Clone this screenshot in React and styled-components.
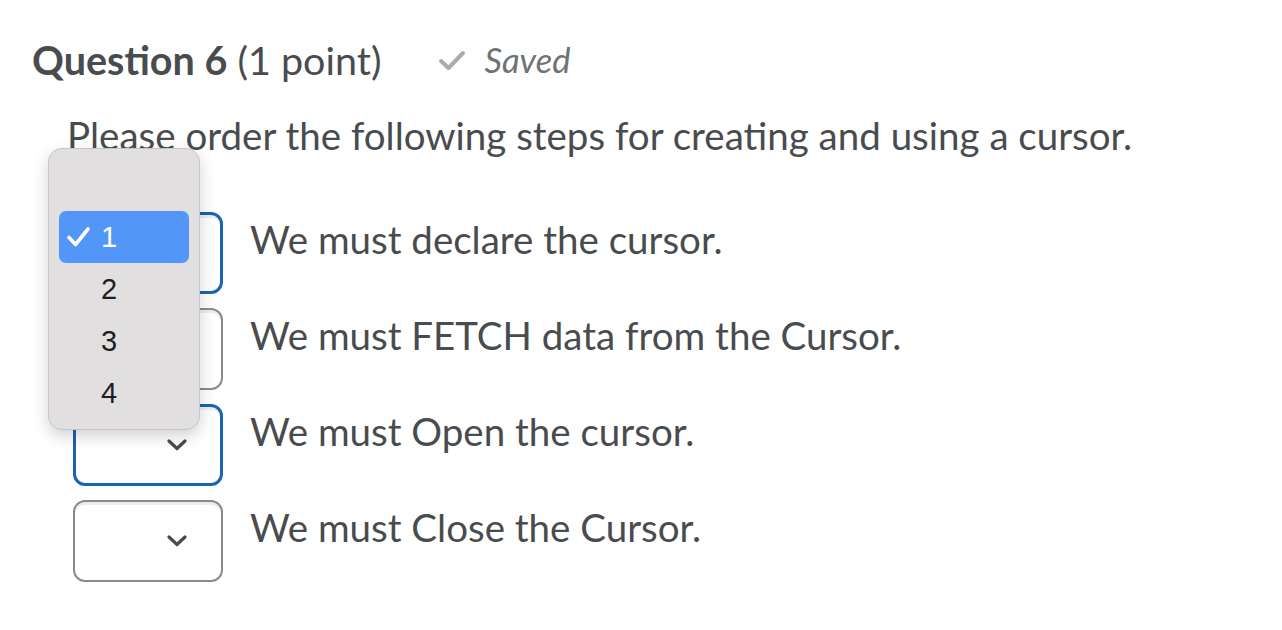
import React from 'react';
import styled, { createGlobalStyle } from 'styled-components';

const steps = [
  { text: 'We must declare the cursor.', focused: true },
  { text: 'We must FETCH data from the Cursor.', focused: false },
  { text: 'We must Open the cursor.', focused: true },
  { text: 'We must Close the Cursor.', focused: false },
];

const options = ['', '1', '2', '3', '4'];

const GlobalStyle = createGlobalStyle`
  body {
    margin: 0;
    background: #fff;
    font-family: Lato, "Open Sans", sans-serif;
    color: #494c4e;
  }
`;

const Page = styled.div`
  padding: 34px 0 0 32px;
`;

const Header = styled.div`
  display: flex;
  align-items: baseline;
  line-height: 52px;
`;

const Title = styled.h2`
  margin: 0;
  font-size: 39.5px;
  font-weight: 400;
  b { font-weight: 700; }
`;

const Saved = styled.span`
  position: relative;
  top: -4px;
  display: inline-flex;
  align-items: center;
  gap: 18px;
  margin-left: 57px;
  font-size: 34.5px;
  font-style: italic;
  color: #6e7376;
  svg { position: relative; top: 1px; }
`;

const Prompt = styled.p`
  margin: 21px 0 0 35px;
  font-size: 38.5px;
  line-height: 48px;
`;

const List = styled.div`
  position: relative;
  margin: 53px 0 0 41px;
  display: grid;
  row-gap: 14px;
`;

const Row = styled.div`
  display: flex;
  align-items: flex-start;
  gap: 27px;
`;

const SelectBox = styled.div`
  box-sizing: border-box;
  flex: none;
  width: 150px;
  height: 82px;
  border: ${p => (p.$focused ? '3px solid #1c63b0' : '2px solid #868c8f')};
  border-radius: 12px;
  box-shadow: inset 0 3px 0 #eceeef;
  display: flex;
  align-items: center;
  justify-content: flex-end;
  padding-right: ${p => (p.$focused ? '33px' : '34px')};
  background: #fff;
`;

const Label = styled.span`
  margin-top: 5px;
  font-size: 38.5px;
  line-height: 44px;
`;

const Popup = styled.div`
  position: absolute;
  left: -25px;
  top: -64px;
  box-sizing: border-box;
  width: 152px;
  padding: 10px;
  background: #e1dfe0;
  border: 1px solid #c6c4c5;
  border-radius: 14px;
  box-shadow: 0 6px 16px rgba(0, 0, 0, 0.18);
  font-family: "Liberation Sans", Arial, sans-serif;
`;

const Option = styled.div`
  position: relative;
  height: 52px;
  border-radius: 7px;
  display: flex;
  align-items: center;
  padding-left: 42px;
  font-size: 29px;
  color: ${p => (p.$selected ? '#fff' : '#1e1e1e')};
  background: ${p => (p.$selected ? '#5297f7' : 'transparent')};
  svg { position: absolute; left: 7px; top: 15px; }
`;

const Chevron = () => (
  <svg width="20" height="12" viewBox="0 0 20 12">
    <path d="M2 2 L10 9.5 L18 2" fill="none" stroke="#494c4e" strokeWidth="3.2" strokeLinecap="round" strokeLinejoin="round" />
  </svg>
);

const App = () => (
  <>
    <GlobalStyle />
    <Page>
      <Header>
        <Title><b>Question 6</b> (1 point)</Title>
        <Saved>
          <svg width="28" height="22" viewBox="0 0 28 22">
            <path d="M3 11 L10.5 18 L25 3" fill="none" stroke="#a7acb0" strokeWidth="4" strokeLinecap="round" strokeLinejoin="round" />
          </svg>
          Saved
        </Saved>
      </Header>
      <Prompt>Please order the following steps for creating and using a cursor.</Prompt>
      <List>
        {steps.map((s, i) => (
          <Row key={i}>
            <SelectBox $focused={s.focused}>{i >= 2 && <Chevron />}</SelectBox>
            <Label>{s.text}</Label>
          </Row>
        ))}
        <Popup>
          {options.map((o, i) => (
            <Option key={i} $selected={o === '1'}>
              {o === '1' && (
                <svg width="26" height="22" viewBox="0 0 26 22">
                  <path d="M3 11.5 L9.5 18.5 L22 3" fill="none" stroke="#fff" strokeWidth="3.6" strokeLinecap="round" strokeLinejoin="round" />
                </svg>
              )}
              {o}
            </Option>
          ))}
        </Popup>
      </List>
    </Page>
  </>
);

export default App;
